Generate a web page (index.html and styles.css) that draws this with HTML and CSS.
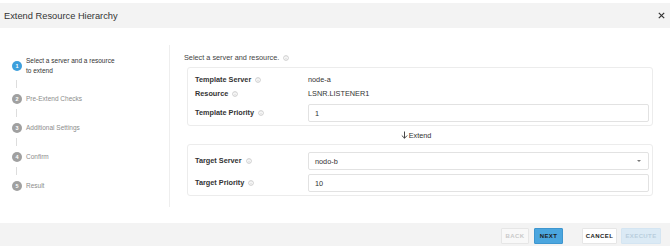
FILE: index.html
```html
<!DOCTYPE html>
<html lang="en">
  <head>
    <meta charset="UTF-8" />
    <meta name="viewport" content="width=device-width, initial-scale=1.0" />
    <title>Extend Resource Hierarchy</title>
    <link rel="stylesheet" href="styles.css">
  </head>
  <body>
    <div class="dialog">
      <div class="dialog-header">
        <span class="dialog-title">Extend Resource Hierarchy</span>
        <svg class="close-icon" width="7" height="7" viewBox="0 0 7 7">
          <path d="M0.8 0.8 L6.2 6.2 M6.2 0.8 L0.8 6.2" stroke="#333" stroke-width="1.2" />
        </svg>
      </div>

      <div class="dialog-body">
        <div class="steps">
          <div class="step active">
            <span class="step-num">1</span>
            <span class="step-label">Select a server and a resource<br />to extend</span>
          </div>
          <div class="step-line"></div>
          <div class="step">
            <span class="step-num">2</span>
            <span class="step-label">Pre-Extend Checks</span>
          </div>
          <div class="step-line"></div>
          <div class="step">
            <span class="step-num">3</span>
            <span class="step-label">Additional Settings</span>
          </div>
          <div class="step-line"></div>
          <div class="step">
            <span class="step-num">4</span>
            <span class="step-label">Confirm</span>
          </div>
          <div class="step-line"></div>
          <div class="step">
            <span class="step-num">5</span>
            <span class="step-label">Result</span>
          </div>
        </div>

        <div class="content">
          <p class="intro">Select a server and resource. <svg class="info" width="6" height="6" viewBox="0 0 6 6"><circle cx="3" cy="3" r="2.4" fill="none" stroke="#b0b0b0" stroke-width="0.6"/><path d="M3 2.6 V4.4 M3 1.5 V2" stroke="#b0b0b0" stroke-width="0.6"/></svg></p>

          <div class="card card-template">
            <div class="field-label">Template Server <svg class="info" width="6" height="6" viewBox="0 0 6 6"><circle cx="3" cy="3" r="2.4" fill="none" stroke="#b0b0b0" stroke-width="0.6"/><path d="M3 2.6 V4.4 M3 1.5 V2" stroke="#b0b0b0" stroke-width="0.6"/></svg></div>
            <div class="field-value">node-a</div>
            <div class="field-label">Resource <svg class="info" width="6" height="6" viewBox="0 0 6 6"><circle cx="3" cy="3" r="2.4" fill="none" stroke="#b0b0b0" stroke-width="0.6"/><path d="M3 2.6 V4.4 M3 1.5 V2" stroke="#b0b0b0" stroke-width="0.6"/></svg></div>
            <div class="field-value">LSNR.LISTENER1</div>
            <div class="field-label with-input">Template Priority <svg class="info" width="6" height="6" viewBox="0 0 6 6"><circle cx="3" cy="3" r="2.4" fill="none" stroke="#b0b0b0" stroke-width="0.6"/><path d="M3 2.6 V4.4 M3 1.5 V2" stroke="#b0b0b0" stroke-width="0.6"/></svg></div>
            <div class="field-input with-input">1</div>
          </div>

          <div class="extend-row">
            <svg width="7" height="8" viewBox="0 0 7 8">
              <path d="M3.5 0.5 V7.2 M0.8 4.5 L3.5 7.2 L6.2 4.5" fill="none" stroke="#333" stroke-width="0.9" />
            </svg>
            <span>Extend</span>
          </div>

          <div class="card card-target">
            <div class="field-label">Target Server <svg class="info" width="6" height="6" viewBox="0 0 6 6"><circle cx="3" cy="3" r="2.4" fill="none" stroke="#b0b0b0" stroke-width="0.6"/><path d="M3 2.6 V4.4 M3 1.5 V2" stroke="#b0b0b0" stroke-width="0.6"/></svg></div>
            <div class="field-input select">nodo-b<span class="caret"></span></div>
            <div class="field-label">Target Priority <svg class="info" width="6" height="6" viewBox="0 0 6 6"><circle cx="3" cy="3" r="2.4" fill="none" stroke="#b0b0b0" stroke-width="0.6"/><path d="M3 2.6 V4.4 M3 1.5 V2" stroke="#b0b0b0" stroke-width="0.6"/></svg></div>
            <div class="field-input">10</div>
          </div>
        </div>
      </div>

      <div class="dialog-footer">
        <button class="btn btn-back" type="button">BACK</button>
        <button class="btn btn-next" type="button">NEXT</button>
        <button class="btn btn-cancel" type="button">CANCEL</button>
        <button class="btn btn-execute" type="button">EXECUTE</button>
      </div>
    </div>
  </body>
</html>
```

FILE: styles.css
```css
body {
  margin: 0;
  width: 670px;
  height: 250px;
  background: white;
  font-family: "Liberation Sans", Arial, sans-serif;
  color: #333;
  overflow: hidden;
}

.dialog {
  display: flex;
  flex-direction: column;
}

.dialog-header {
  margin-top: 3px;
  height: 25px;
  background-color: #f3f3f3;
  display: flex;
  align-items: center;
  justify-content: space-between;
  padding: 0 5px 0 4px;
}

.dialog-title {
  font-size: 9.3px;
  color: #333;
}

.dialog-body {
  display: flex;
  height: 195px;
}

.steps {
  width: 170px;
  margin: 17px 0 16px;
  padding-top: 11px;
  border-right: 1px solid #eeeeee;
  box-sizing: border-box;
}

.step {
  display: flex;
  align-items: center;
  min-height: 10px;
  padding-left: 12px;
}

.step-num {
  width: 10px;
  height: 10px;
  border-radius: 50%;
  background-color: #a0a0a0;
  color: white;
  font-size: 5.5px;
  font-weight: bold;
  display: flex;
  align-items: center;
  justify-content: center;
  flex-shrink: 0;
}

.step-label {
  margin-left: 4px;
  font-size: 6.5px;
  line-height: 9.5px;
  color: #8c8c8c;
}

.step.active .step-num {
  background-color: #3d9fdc;
}

.step.active .step-label {
  color: #333;
}

.step-line {
  width: 1px;
  height: 8px;
  margin: 5px 0 6px 16px;
  background-color: #dddddd;
}

.content {
  flex: 1;
  padding: 25px 14px 0 14px;
  font-size: 7.3px;
}

.intro {
  margin: 0 0 4px;
  line-height: 10px;
  color: #444;
}

.info {
  vertical-align: -0.5px;
  margin-left: 2px;
}

.card {
  margin: 0 3px;
  border: 1px solid #ececec;
  border-radius: 3px;
  display: grid;
  grid-template-columns: 113px 1fr;
  align-items: center;
}

.card-template {
  padding: 5px 3px 3px 7px;
}

.card-target {
  padding: 7px 3px 3px 7px;
  row-gap: 4px;
}

.field-label {
  font-weight: bold;
  color: #333;
  line-height: 14px;
}

.field-value {
  line-height: 14px;
  color: #333;
}

.with-input {
  margin-top: 3px;
}

.field-input {
  height: 18px;
  box-sizing: border-box;
  border: 1px solid #e2e2e2;
  border-radius: 2px;
  padding-left: 6px;
  display: flex;
  align-items: center;
  color: #333;
  position: relative;
}

.select .caret {
  position: absolute;
  right: 7px;
  top: 7px;
  border-left: 2px solid transparent;
  border-right: 2px solid transparent;
  border-top: 2.5px solid #777;
}

.extend-row {
  height: 18px;
  display: flex;
  align-items: center;
  justify-content: center;
  gap: 1px;
  padding-right: 8px;
}

.extend-row span {
  color: #333;
}

.dialog-footer {
  height: 23px;
  background-color: #f3f3f3;
  display: flex;
  justify-content: flex-end;
  align-items: flex-start;
  padding: 5px 9px 0 0;
  box-sizing: border-box;
  gap: 5px;
}

.btn {
  height: 16px;
  padding: 0;
  font-family: "Liberation Sans", Arial, sans-serif;
  font-size: 6px;
  font-weight: bold;
  letter-spacing: 0.4px;
  text-align: center;
  border-radius: 1px;
  border: 1px solid #e6e6e6;
  box-sizing: border-box;
}

.btn-back {
  width: 28px;
  background-color: #f8f8f8;
  color: #c9c9c9;
}

.btn-next {
  width: 29px;
  background-color: #4ba6df;
  border-color: #3e96cf;
  color: #1b1b1b;
}

.btn-cancel {
  width: 35px;
  margin-left: 14px;
  background-color: white;
  color: #222;
}

.btn-execute {
  width: 40px;
  margin-left: -1px;
  background-color: #dbeaf5;
  border-color: #d4e5f2;
  color: #b9cedd;
}
```
